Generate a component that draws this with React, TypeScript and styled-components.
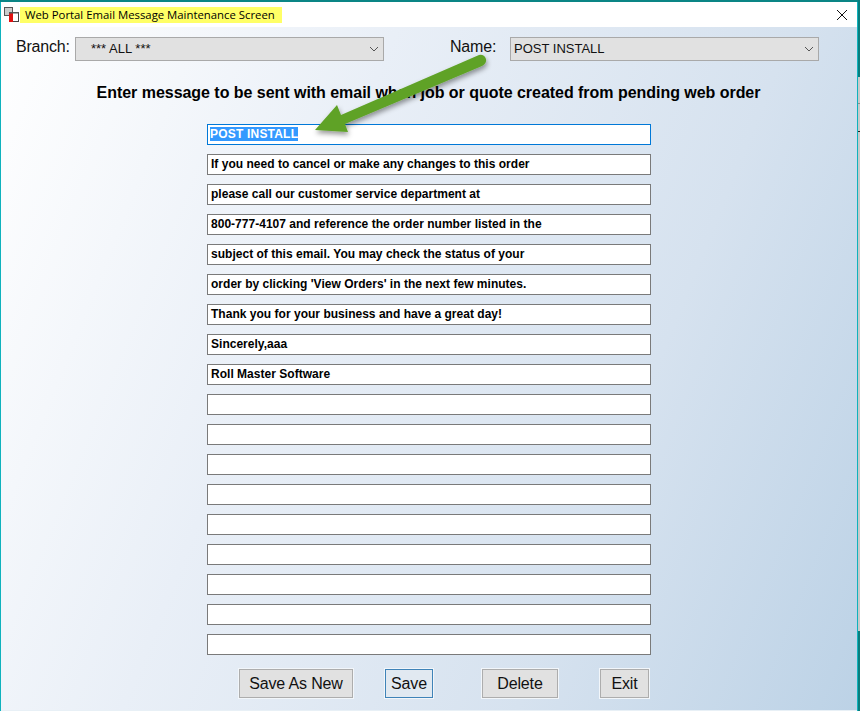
import { FC } from "react"
import styled, { createGlobalStyle } from "styled-components"

const GlobalStyle = createGlobalStyle`
  html, body {
    margin: 0;
    padding: 0;
    background: #0a8585;
  }
`

const StyledDesktop = styled.div`
  position: relative;
  width: 860px;
  height: 711px;
  overflow: hidden;
  display: flex;
  background-color: #0a8585;
  font-family: "Liberation Sans", Arial, sans-serif;
`

const StyledWindow = styled.div`
  width: 858px;
  height: 709px;
  margin-top: 2px;
  box-sizing: border-box;
  border-left: 1px solid #0fb2bd;
  border-right: 1px solid #0fb2bd;
  display: flex;
  flex-direction: column;
`

const StyledSideStrip = styled.div`
  width: 2px;
  height: 711px;
  display: flex;
  flex-direction: column;
`

const StyledStripPart = styled.div<{ $h: number; $color: string }>`
  height: ${({ $h }) => $h}px;
  flex-shrink: 0;
  background-color: ${({ $color }) => $color};
`

const StyledTitleBar = styled.div`
  height: 25px;
  flex-shrink: 0;
  background-color: #fff;
  display: flex;
  align-items: center;
  padding: 0 10px 0 3px;
`

const StyledTitle = styled.div`
  height: 16px;
  width: 262px;
  padding-left: 5px;
  box-sizing: border-box;
  background-color: #ffff66;
  color: #000;
  font-family: "Open Sans", "Noto Sans", sans-serif;
  font-size: 11.35px;
  line-height: 16px;
  white-space: nowrap;
`

const StyledClose = styled.div`
  margin-left: auto;
  display: flex;
`

const StyledBody = styled.div`
  flex: 1;
  display: flex;
  flex-direction: column;
  background: linear-gradient(112deg, #ffffff 0%, #e9eff7 35%, #d6e2ef 70%, #bcd2e6 100%);
  border-bottom: 1px solid #e8f0f6;
`

const StyledTopRow = styled.div`
  display: flex;
  align-items: flex-start;
  padding: 10px 0 0 15px;
`

const StyledLabel = styled.label<{ $w: number; $left?: number }>`
  width: ${({ $w }) => $w}px;
  margin-left: ${({ $left }) => $left ?? 0}px;
  font-size: 16px;
  letter-spacing: -0.2px;
  line-height: 20px;
  color: #111;
`

const StyledSelect = styled.div<{ $indent: number }>`
  width: 309px;
  height: 24px;
  box-sizing: border-box;
  border: 1px solid #a9a9a9;
  background-color: #e1e1e1;
  color: #111;
  font-size: 13px;
  line-height: 22px;
  padding: 0 4px 0 ${({ $indent }) => $indent}px;
  display: flex;
  align-items: center;
  justify-content: space-between;
`

const StyledHeading = styled.h1`
  margin: 22px 0 0;
  padding-right: 1px;
  text-align: center;
  font-size: 16px;
  letter-spacing: -0.035px;
  line-height: 20px;
  font-weight: bold;
  color: #000;
`

const StyledFields = styled.div`
  display: flex;
  flex-direction: column;
  gap: 9px;
  margin: 21px 0 0 206px;
`

const StyledField = styled.div<{ $active?: boolean }>`
  width: 444px;
  height: 21px;
  box-sizing: border-box;
  border: 1px solid ${({ $active }) => ($active ? "#0078d7" : "#7a7a7a")};
  background-color: #fff;
  padding-left: ${({ $active }) => ($active ? 2 : 3)}px;
  color: #000;
  font-family: "Liberation Sans", Arial, sans-serif;
  font-size: 12px;
  font-weight: bold;
  letter-spacing: 0.02px;
  line-height: 18px;
  white-space: nowrap;
  overflow: hidden;
`

const StyledSelection = styled.span`
  background-color: #3399ff;
  color: #fff;
  letter-spacing: 0.2px;
`

const StyledButtons = styled.div`
  display: flex;
  margin: 14px 0 0 238px;
`

const StyledButton = styled.button<{ $w: number; $gap?: number; $focused?: boolean }>`
  width: ${({ $w }) => $w}px;
  height: 29px;
  margin-left: ${({ $gap }) => $gap ?? 0}px;
  padding: 0;
  box-sizing: border-box;
  border: 1px solid ${({ $focused }) => ($focused ? "#3f83b8" : "#adadad")};
  background-color: ${({ $focused }) => ($focused ? "#e1e9f1" : "#e1e1e1")};
  outline: 1px solid #f2f6fa;
  color: #111;
  font-family: "Liberation Sans", Arial, sans-serif;
  font-size: 16px;
  letter-spacing: -0.15px;
`

const StyledArrow = styled.svg`
  position: absolute;
  top: 0;
  left: 0;
  pointer-events: none;
`

const Chevron: FC = () => (
  <svg width="10" height="6" viewBox="0 0 10 6" fill="none" stroke="#555" strokeWidth="1">
    <path d="M1 1 L5 5 L9 1" />
  </svg>
)

const AppIcon: FC = () => (
  <svg width="16" height="17" viewBox="0 0 16 17" style={{ flexShrink: 0 }}>
    <rect x="0.5" y="1.5" width="8" height="8" fill="#ccc" stroke="#555" />
    <rect x="5.5" y="6.5" width="9" height="9" fill="#fff" stroke="#444" />
    <rect x="5" y="6" width="4" height="10" fill="#e01010" />
    <rect x="5" y="6" width="10" height="1.5" fill="#555" />
  </svg>
)

const messages = [
  "If you need to cancel or make any changes to this order",
  "please call our customer service department at",
  "800-777-4107 and reference the order number listed in the",
  "subject of this email. You may check the status of your",
  "order by clicking 'View Orders' in the next few minutes.",
  "Thank you for your business and have a great day!",
  "Sincerely,aaa",
  "Roll Master Software",
  "",
  "",
  "",
  "",
  "",
  "",
  "",
  "",
  "",
]

const App: FC = () => {
  return (
    <>
      <GlobalStyle />
      <StyledDesktop>
        <StyledWindow>
          <StyledTitleBar>
            <AppIcon />
            <StyledTitle>Web Portal Email Message Maintenance Screen</StyledTitle>
            <StyledClose>
              <svg width="10" height="10" viewBox="0 0 10 10" stroke="#111" strokeWidth="1">
                <path d="M0 0 L10 10 M10 0 L0 10" />
              </svg>
            </StyledClose>
          </StyledTitleBar>
          <StyledBody>
            <StyledTopRow>
              <StyledLabel $w={59}>Branch:</StyledLabel>
              <StyledSelect $indent={15}>
                *** ALL ***
                <Chevron />
              </StyledSelect>
              <StyledLabel $w={60} $left={66}>
                Name:
              </StyledLabel>
              <StyledSelect $indent={3}>
                POST INSTALL
                <Chevron />
              </StyledSelect>
            </StyledTopRow>
            <StyledHeading>
              Enter message to be sent with email when job or quote created from pending web order
            </StyledHeading>
            <StyledFields>
              <StyledField $active>
                <StyledSelection>POST INSTALL</StyledSelection>
              </StyledField>
              {messages.map((text, i) => (
                <StyledField key={i}>{text}</StyledField>
              ))}
            </StyledFields>
            <StyledButtons>
              <StyledButton $w={114}>Save As New</StyledButton>
              <StyledButton $w={48} $gap={32} $focused>
                Save
              </StyledButton>
              <StyledButton $w={76} $gap={49}>
                Delete
              </StyledButton>
              <StyledButton $w={49} $gap={42}>
                Exit
              </StyledButton>
            </StyledButtons>
          </StyledBody>
        </StyledWindow>
        <StyledSideStrip>
          <StyledStripPart $h={77} $color="#0a7d7d" />
          <StyledStripPart $h={26} $color="#c9c9c9" />
          <StyledStripPart $h={1} $color="#8c8c8c" />
          <StyledStripPart $h={27} $color="#c9c9c9" />
          <StyledStripPart $h={1} $color="#222" />
          <StyledStripPart $h={499} $color="#c9c9c9" />
          <StyledStripPart $h={80} $color="#0a7d7d" />
        </StyledSideStrip>
        <StyledArrow width="860" height="711" viewBox="0 0 860 711">
          <defs>
            <filter id="arrowShadow" x="-20%" y="-20%" width="140%" height="140%">
              <feDropShadow dx="1" dy="3" stdDeviation="2.5" floodColor="#000" floodOpacity="0.4" />
            </filter>
          </defs>
          <g filter="url(#arrowShadow)" fill="#5fa227">
            <path d="M315 130 L337 105 L341 115 L479 55 Q484 54 486 59 Q487 63 482 66 L345 124 L348 132 Z" />
          </g>
        </StyledArrow>
      </StyledDesktop>
    </>
  )
}

export default App
